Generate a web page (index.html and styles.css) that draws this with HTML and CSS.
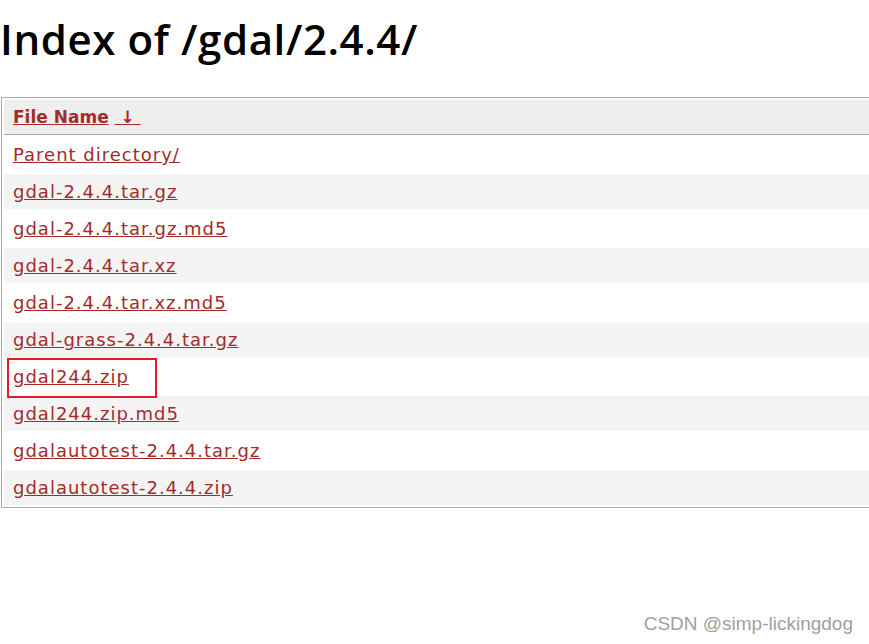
FILE: index.html
```html
<!DOCTYPE html>
<html lang="en">
<head>
    <meta charset="UTF-8">
    <title>Index of /gdal/2.4.4/</title>
    <link rel="stylesheet" href="styles.css">
</head>
<body>
    <h1>Index of /gdal/2.4.4/</h1>
    <table id="list">
        <thead>
            <tr>
                <th><a href="#" class="sort">File Name</a>&nbsp;<a href="#" class="sort">&nbsp;&darr;&nbsp;</a></th>
            </tr>
        </thead>
        <tbody>
            <tr><td><a href="#">Parent directory/</a></td></tr>
            <tr><td><a href="#">gdal-2.4.4.tar.gz</a></td></tr>
            <tr><td><a href="#">gdal-2.4.4.tar.gz.md5</a></td></tr>
            <tr><td><a href="#">gdal-2.4.4.tar.xz</a></td></tr>
            <tr><td><a href="#">gdal-2.4.4.tar.xz.md5</a></td></tr>
            <tr><td><a href="#">gdal-grass-2.4.4.tar.gz</a></td></tr>
            <tr><td class="marked"><a href="#">gdal244.zip</a><span class="mark"></span></td></tr>
            <tr><td><a href="#">gdal244.zip.md5</a></td></tr>
            <tr><td><a href="#">gdalautotest-2.4.4.tar.gz</a></td></tr>
            <tr><td><a href="#">gdalautotest-2.4.4.zip</a></td></tr>
        </tbody>
    </table>
    <div class="watermark">CSDN @simp-lickingdog</div>
</body>
</html>
```

FILE: styles.css
```css
html {
    overflow: hidden;
}
body {
    margin: 0;
    padding: 0;
    font-family: "DejaVu Sans", Verdana, sans-serif;
    background-color: white;
    position: relative;
    height: 644px;
}
h1 {
    font-family: "Open Sans", "DejaVu Sans", sans-serif;
    font-weight: 600;
    font-size: 42px;
    letter-spacing: 0.6px;
    margin: 0;
    padding: 12px 0 0 0;
    line-height: 54px;
    color: #000;
}
#list {
    margin-top: 31px;
    margin-left: 1px;
    width: 900px;
    border: 1px solid #aaa;
    border-spacing: 2px;
    font-size: 18px;
    letter-spacing: 1px;
}
#list th {
    text-align: left;
    background-color: #eee;
    border-bottom: 1px solid #aaa;
    height: 34px;
    padding: 0 9px;
    font-size: 17px;
    letter-spacing: 0;
}
#list td {
    height: 35px;
    padding: 0 9px;
}
#list tbody tr:nth-child(even) td {
    background-color: #f4f4f4;
}
#list a {
    color: #a52a2a;
}
#list a.sort {
    font-weight: bold;
}
.marked {
    position: relative;
}
.mark {
    position: absolute;
    left: 3px;
    top: -1px;
    width: 146px;
    height: 36px;
    border: 2px solid #e81a24;
}
.watermark {
    position: absolute;
    right: 16px;
    top: 613px;
    font-family: "Liberation Sans", Arial, sans-serif;
    font-size: 19px;
    color: #a0a0a0;
}
```
